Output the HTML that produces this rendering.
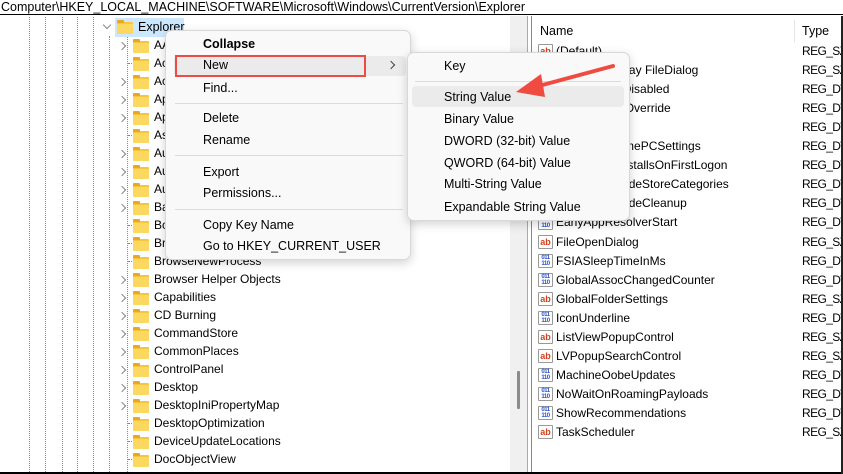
<!DOCTYPE html>
<html style="overflow:hidden;width:843px;height:474px"><head><meta charset="utf-8"><style>
*{margin:0;padding:0;box-sizing:border-box}
body{width:843px;height:474px;overflow:hidden;background:#fff;font-family:"Liberation Sans",sans-serif;font-size:12px;color:#000;position:relative}
.a{position:absolute;white-space:nowrap}
.vd{position:absolute;top:17px;height:455px;border-left:1px dotted #888;width:0}
.hd{position:absolute;border-top:1px dotted #888;width:8px;height:0}
.fo{position:absolute;width:16px;height:12px;background:#f8c53a;border-radius:1px}
.fo:before{content:"";position:absolute;left:0;top:-2px;width:7px;height:3px;background:#e8a820;border-radius:1px 1px 0 0}
.fo:after{content:"";position:absolute;left:0;top:2px;width:16px;height:10px;background:#fcd860;border-radius:1px}
.ch{position:absolute;width:6px;height:6px;border-right:1.3px solid #888;border-bottom:1.3px solid #888;transform:rotate(-45deg)}
.t{position:absolute;font-size:12px;line-height:18px;white-space:nowrap}
.ty{position:absolute;font-size:12px;line-height:18px;left:802px;width:40px;overflow:hidden;white-space:nowrap;letter-spacing:-0.6px}
.ic{position:absolute;width:15px;height:14px;border:1px solid #999;border-radius:1px;background:#fff;font-size:9px;font-weight:bold;line-height:12px;text-align:center}
.ab{color:#d4401e}
.bi{color:#2a4fc8;font-size:6px;line-height:6px;letter-spacing:-0.5px}
.menu{position:absolute;background:#f9f9f9;border:1px solid #d8d8d8;border-radius:7px;box-shadow:0 3px 10px rgba(0,0,0,.18)}
.mi{position:absolute;font-size:12.5px;white-space:nowrap}
.sep{position:absolute;height:1px;background:#dcdcdc}
</style></head><body>
<div class="a" style="left:0;top:0;width:843px;height:15px;border-bottom:1px solid #000;font-size:12.5px;line-height:14px;padding-left:1px;overflow:hidden">Computer\HKEY_LOCAL_MACHINE\SOFTWARE\Microsoft\Windows\CurrentVersion\Explorer</div>

<div class="vd" style="left:29px"></div><div class="vd" style="left:45px"></div><div class="vd" style="left:62px"></div><div class="vd" style="left:77px"></div><div class="vd" style="left:93px"></div><div class="vd" style="left:109px;top:36px;height:436px"></div>
<div class="vd" style="left:127px;top:37px;height:435px"></div>

<div class="a" style="left:115px;top:18px;width:69px;height:19px;background:#cce8ff"></div>
<div class="ch" style="left:104px;top:22px;transform:rotate(45deg)"></div>
<div class="fo" style="left:117px;top:22px"></div>
<div class="t" style="left:138px;top:18px;font-size:12.5px">Explorer</div>

<div class="ch" style="left:119px;top:43px"></div><div class="fo" style="left:133px;top:41px"></div><div class="t" style="left:154px;top:36px">AA</div>
<div class="hd" style="left:128px;top:63px"></div><div class="fo" style="left:133px;top:59px"></div><div class="t" style="left:154px;top:54px">Ac</div>
<div class="ch" style="left:119px;top:79px"></div><div class="fo" style="left:133px;top:77px"></div><div class="t" style="left:154px;top:72px">Ac</div>
<div class="ch" style="left:119px;top:97px"></div><div class="fo" style="left:133px;top:95px"></div><div class="t" style="left:154px;top:90px">Ap</div>
<div class="ch" style="left:119px;top:115px"></div><div class="fo" style="left:133px;top:113px"></div><div class="t" style="left:154px;top:108px">Ap</div>
<div class="hd" style="left:128px;top:135px"></div><div class="fo" style="left:133px;top:131px"></div><div class="t" style="left:154px;top:126px">As</div>
<div class="ch" style="left:119px;top:151px"></div><div class="fo" style="left:133px;top:149px"></div><div class="t" style="left:154px;top:144px">Au</div>
<div class="ch" style="left:119px;top:169px"></div><div class="fo" style="left:133px;top:167px"></div><div class="t" style="left:154px;top:162px">Au</div>
<div class="ch" style="left:119px;top:187px"></div><div class="fo" style="left:133px;top:185px"></div><div class="t" style="left:154px;top:180px">Au</div>
<div class="ch" style="left:119px;top:205px"></div><div class="fo" style="left:133px;top:203px"></div><div class="t" style="left:154px;top:198px">Ba</div>
<div class="hd" style="left:128px;top:225px"></div><div class="fo" style="left:133px;top:221px"></div><div class="t" style="left:154px;top:216px">Bo</div>
<div class="hd" style="left:128px;top:243px"></div><div class="fo" style="left:133px;top:239px"></div><div class="t" style="left:154px;top:234px">Br</div>
<div class="hd" style="left:128px;top:261px"></div><div class="fo" style="left:133px;top:257px"></div><div class="t" style="left:154px;top:252px">BrowseNewProcess</div>
<div class="ch" style="left:119px;top:277px"></div><div class="fo" style="left:133px;top:275px"></div><div class="t" style="left:154px;top:270px">Browser Helper Objects</div>
<div class="ch" style="left:119px;top:295px"></div><div class="fo" style="left:133px;top:293px"></div><div class="t" style="left:154px;top:288px">Capabilities</div>
<div class="ch" style="left:119px;top:313px"></div><div class="fo" style="left:133px;top:311px"></div><div class="t" style="left:154px;top:306px">CD Burning</div>
<div class="ch" style="left:119px;top:331px"></div><div class="fo" style="left:133px;top:329px"></div><div class="t" style="left:154px;top:324px">CommandStore</div>
<div class="ch" style="left:119px;top:349px"></div><div class="fo" style="left:133px;top:347px"></div><div class="t" style="left:154px;top:342px">CommonPlaces</div>
<div class="ch" style="left:119px;top:367px"></div><div class="fo" style="left:133px;top:365px"></div><div class="t" style="left:154px;top:360px">ControlPanel</div>
<div class="ch" style="left:119px;top:385px"></div><div class="fo" style="left:133px;top:383px"></div><div class="t" style="left:154px;top:378px">Desktop</div>
<div class="ch" style="left:119px;top:403px"></div><div class="fo" style="left:133px;top:401px"></div><div class="t" style="left:154px;top:396px">DesktopIniPropertyMap</div>
<div class="hd" style="left:128px;top:423px"></div><div class="fo" style="left:133px;top:419px"></div><div class="t" style="left:154px;top:414px">DesktopOptimization</div>
<div class="hd" style="left:128px;top:441px"></div><div class="fo" style="left:133px;top:437px"></div><div class="t" style="left:154px;top:432px">DeviceUpdateLocations</div>
<div class="hd" style="left:128px;top:459px"></div><div class="fo" style="left:133px;top:455px"></div><div class="t" style="left:154px;top:450px">DocObjectView</div>

<div class="a" style="left:510px;top:16px;width:17px;height:456px;background:#f0f0f0"></div>
<div class="a" style="left:517px;top:371px;width:3px;height:38px;background:#8a8a8a;border-radius:1px"></div>
<div class="a" style="left:527px;top:16px;width:1px;height:456px;background:#aaa"></div>
<div class="a" style="left:531px;top:16px;width:1px;height:456px;background:#888"></div>

<div class="t" style="left:540px;top:22px;font-size:12.5px">Name</div>
<div class="a" style="left:794px;top:20px;width:1px;height:22px;background:#e5e5e5"></div>
<div class="t" style="left:802px;top:22px;font-size:12.5px">Type</div>

<div class="ic ab" style="left:538px;top:44px">ab</div><div class="t" style="left:556px;top:42px">(Default)</div><div class="ty" style="top:42px">REG_SZ</div>
<div class="t" style="left:556px;top:61px">EnableAutoTray FileDialog</div><div class="ty" style="top:61px">REG_SZ</div>
<div class="t" style="left:556px;top:80px">ExperimentsDisabled</div><div class="ty" style="top:80px">REG_DWORD</div>
<div class="t" style="left:556px;top:99px">DesktopTaskOverride</div><div class="ty" style="top:99px">REG_DWORD</div>
<div class="t" style="left:556px;top:118px">Disable</div><div class="ty" style="top:118px">REG_DWORD</div>
<div class="t" style="left:556px;top:137px">DisableResumePCSettings</div><div class="ty" style="top:137px">REG_DWORD</div>
<div class="t" style="left:556px;top:156px">DisableAppInstallsOnFirstLogon</div><div class="ty" style="top:156px">REG_DWORD</div>
<div class="t" style="left:556px;top:175px">DisableUpgradeStoreCategories</div><div class="ty" style="top:175px">REG_DWORD</div>
<div class="t" style="left:556px;top:194px">DisableUpgradeCleanup</div><div class="ty" style="top:194px">REG_DWORD</div>
<div class="ic bi" style="left:538px;top:216px">011<br>110</div><div class="t" style="left:556px;top:213px">EarlyAppResolverStart</div><div class="ty" style="top:213px">REG_DWORD</div>
<div class="ic ab" style="left:538px;top:235px">ab</div><div class="t" style="left:556px;top:233px">FileOpenDialog</div><div class="ty" style="top:233px">REG_SZ</div>
<div class="ic bi" style="left:538px;top:254px">011<br>110</div><div class="t" style="left:556px;top:252px">FSIASleepTimeInMs</div><div class="ty" style="top:252px">REG_DWORD</div>
<div class="ic bi" style="left:538px;top:273px">011<br>110</div><div class="t" style="left:556px;top:271px">GlobalAssocChangedCounter</div><div class="ty" style="top:271px">REG_DWORD</div>
<div class="ic ab" style="left:538px;top:292px">ab</div><div class="t" style="left:556px;top:290px">GlobalFolderSettings</div><div class="ty" style="top:290px">REG_SZ</div>
<div class="ic bi" style="left:538px;top:311px">011<br>110</div><div class="t" style="left:556px;top:309px">IconUnderline</div><div class="ty" style="top:309px">REG_DWORD</div>
<div class="ic ab" style="left:538px;top:330px">ab</div><div class="t" style="left:556px;top:328px">ListViewPopupControl</div><div class="ty" style="top:328px">REG_SZ</div>
<div class="ic ab" style="left:538px;top:349px">ab</div><div class="t" style="left:556px;top:347px">LVPopupSearchControl</div><div class="ty" style="top:347px">REG_SZ</div>
<div class="ic bi" style="left:538px;top:368px">011<br>110</div><div class="t" style="left:556px;top:366px">MachineOobeUpdates</div><div class="ty" style="top:366px">REG_DWORD</div>
<div class="ic bi" style="left:538px;top:387px">011<br>110</div><div class="t" style="left:556px;top:385px">NoWaitOnRoamingPayloads</div><div class="ty" style="top:385px">REG_DWORD</div>
<div class="ic bi" style="left:538px;top:406px">011<br>110</div><div class="t" style="left:556px;top:404px">ShowRecommendations</div><div class="ty" style="top:404px">REG_DWORD</div>
<div class="ic ab" style="left:538px;top:425px">ab</div><div class="t" style="left:556px;top:423px">TaskScheduler</div><div class="ty" style="top:423px">REG_SZ</div>

<div class="a" style="left:0;top:472px;width:843px;height:2px;background:#000"></div>
<div class="a" style="left:841px;top:16px;width:2px;height:458px;background:#222"></div>

<div class="menu" style="left:165px;top:30px;width:246px;height:230px"></div>
<div class="a" style="left:174px;top:56px;width:232px;height:20px;background:#ebebeb;border-radius:4px"></div>
<div class="a" style="left:175px;top:55px;width:191px;height:22px;border:2px solid #ee4b45"></div>
<div class="mi" style="left:203px;top:37px;font-weight:bold">Collapse</div>
<div class="mi" style="left:203px;top:58px">New</div>
<div class="a" style="left:388px;top:62px;width:6px;height:6px;border-right:1.2px solid #444;border-top:1.2px solid #444;transform:rotate(45deg)"></div>
<div class="mi" style="left:203px;top:81px">Find...</div>
<div class="sep" style="left:175px;top:103px;width:228px"></div>
<div class="mi" style="left:203px;top:111px">Delete</div>
<div class="mi" style="left:203px;top:133px">Rename</div>
<div class="sep" style="left:175px;top:155px;width:228px"></div>
<div class="mi" style="left:203px;top:165px">Export</div>
<div class="mi" style="left:203px;top:186px">Permissions...</div>
<div class="sep" style="left:175px;top:209px;width:228px"></div>
<div class="mi" style="left:203px;top:218px">Copy Key Name</div>
<div class="mi" style="left:203px;top:239px">Go to HKEY_CURRENT_USER</div>

<div class="menu" style="left:407px;top:52px;width:223px;height:169px"></div>
<div class="mi" style="left:444px;top:59px">Key</div>
<div class="sep" style="left:415px;top:81px;width:206px"></div>
<div class="a" style="left:412px;top:86px;width:212px;height:21px;background:#ebebeb;border-radius:4px"></div>
<div class="mi" style="left:444px;top:90px">String Value</div>
<div class="mi" style="left:444px;top:112px">Binary Value</div>
<div class="mi" style="left:444px;top:134px">DWORD (32-bit) Value</div>
<div class="mi" style="left:444px;top:156px">QWORD (64-bit) Value</div>
<div class="mi" style="left:444px;top:177px">Multi-String Value</div>
<div class="mi" style="left:444px;top:200px">Expandable String Value</div>

<svg class="a" style="left:0;top:0" width="843" height="474">
<line x1="613" y1="66" x2="535" y2="87" stroke="#ef4b40" stroke-width="4" stroke-linecap="round"/>
<polygon points="516,92 541,74 545,97" fill="#ef4b40"/>
</svg>
</body></html>
